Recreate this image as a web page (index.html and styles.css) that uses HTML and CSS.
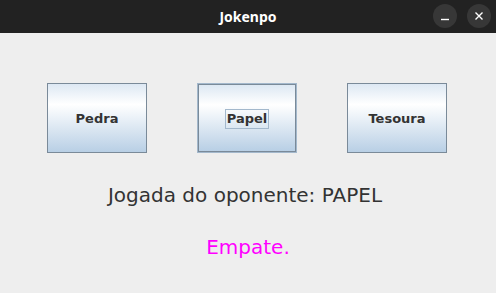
FILE: index.html
```html
<!DOCTYPE html>
<html lang="en">
<head>
    <meta charset="UTF-8">
    <title>Jokenpo</title>
    <link rel="stylesheet" href="styles.css">
</head>
<body>
    <div class="titlebar">
        <span class="title">Jokenpo</span>
        <div class="controls">
            <span class="ctl">
                <svg width="10" height="10" viewBox="0 0 10 10"><path d="M1 8.5H9" stroke="#fff" stroke-width="1.4"/></svg>
            </span>
            <span class="ctl">
                <svg width="10" height="10" viewBox="0 0 10 10"><path d="M1.5 1.5L8.5 8.5M8.5 1.5L1.5 8.5" stroke="#fff" stroke-width="1.4"/></svg>
            </span>
        </div>
    </div>
    <div class="container">
        <div class="choices">
            <button>Pedra</button>
            <button class="focused"><span class="focus">Papel</span></button>
            <button>Tesoura</button>
        </div>
        <p class="opponent">Jogada do oponente: PAPEL</p>
        <p class="result">Empate.</p>
    </div>
</body>
</html>
```

FILE: styles.css
```css
body {
    margin: 0;
    background-color: #eeeeee;
    font-family: "DejaVu Sans", sans-serif;
    color: #333;
}
.titlebar {
    height: 33px;
    background-color: #222222;
    display: flex;
    align-items: center;
    justify-content: center;
    position: relative;
}
.title {
    color: #fff;
    font-weight: bold;
    font-size: 14px;
    font-family: "Noto Sans", sans-serif;
}
.controls {
    position: absolute;
    right: 5px;
    top: 4px;
    display: flex;
    gap: 10px;
}
.ctl {
    width: 24px;
    height: 24px;
    border-radius: 50%;
    background-color: #373737;
    display: flex;
    align-items: center;
    justify-content: center;
}
.container {
    padding-top: 50px;
}
.choices {
    display: flex;
    justify-content: center;
    gap: 50px;
    padding-right: 2px;
}
button {
    width: 100px;
    height: 70px;
    border: 1px solid #7a8a99;
    background: linear-gradient(#dde8f3 0%, #ffffff 30%, #b8cfe5 100%);
    font-family: "DejaVu Sans", sans-serif;
    font-weight: bold;
    font-size: 13px;
    color: #333;
    padding: 0;
}
button.focused {
    outline: 1px solid #a3b8cc;
    outline-offset: 0;
    width: 98px;
    height: 68px;
    margin: 1px;
}
.focus {
    border: 1px solid #a3b8cc;
    padding: 1px 1px 2px;
}
.opponent {
    margin: 30px 0 0;
    padding-right: 6px;
    text-align: center;
    font-size: 20px;
}
.result {
    margin: 28px 0 0;
    text-align: center;
    font-size: 20px;
    color: #ff00ff;
}
```
